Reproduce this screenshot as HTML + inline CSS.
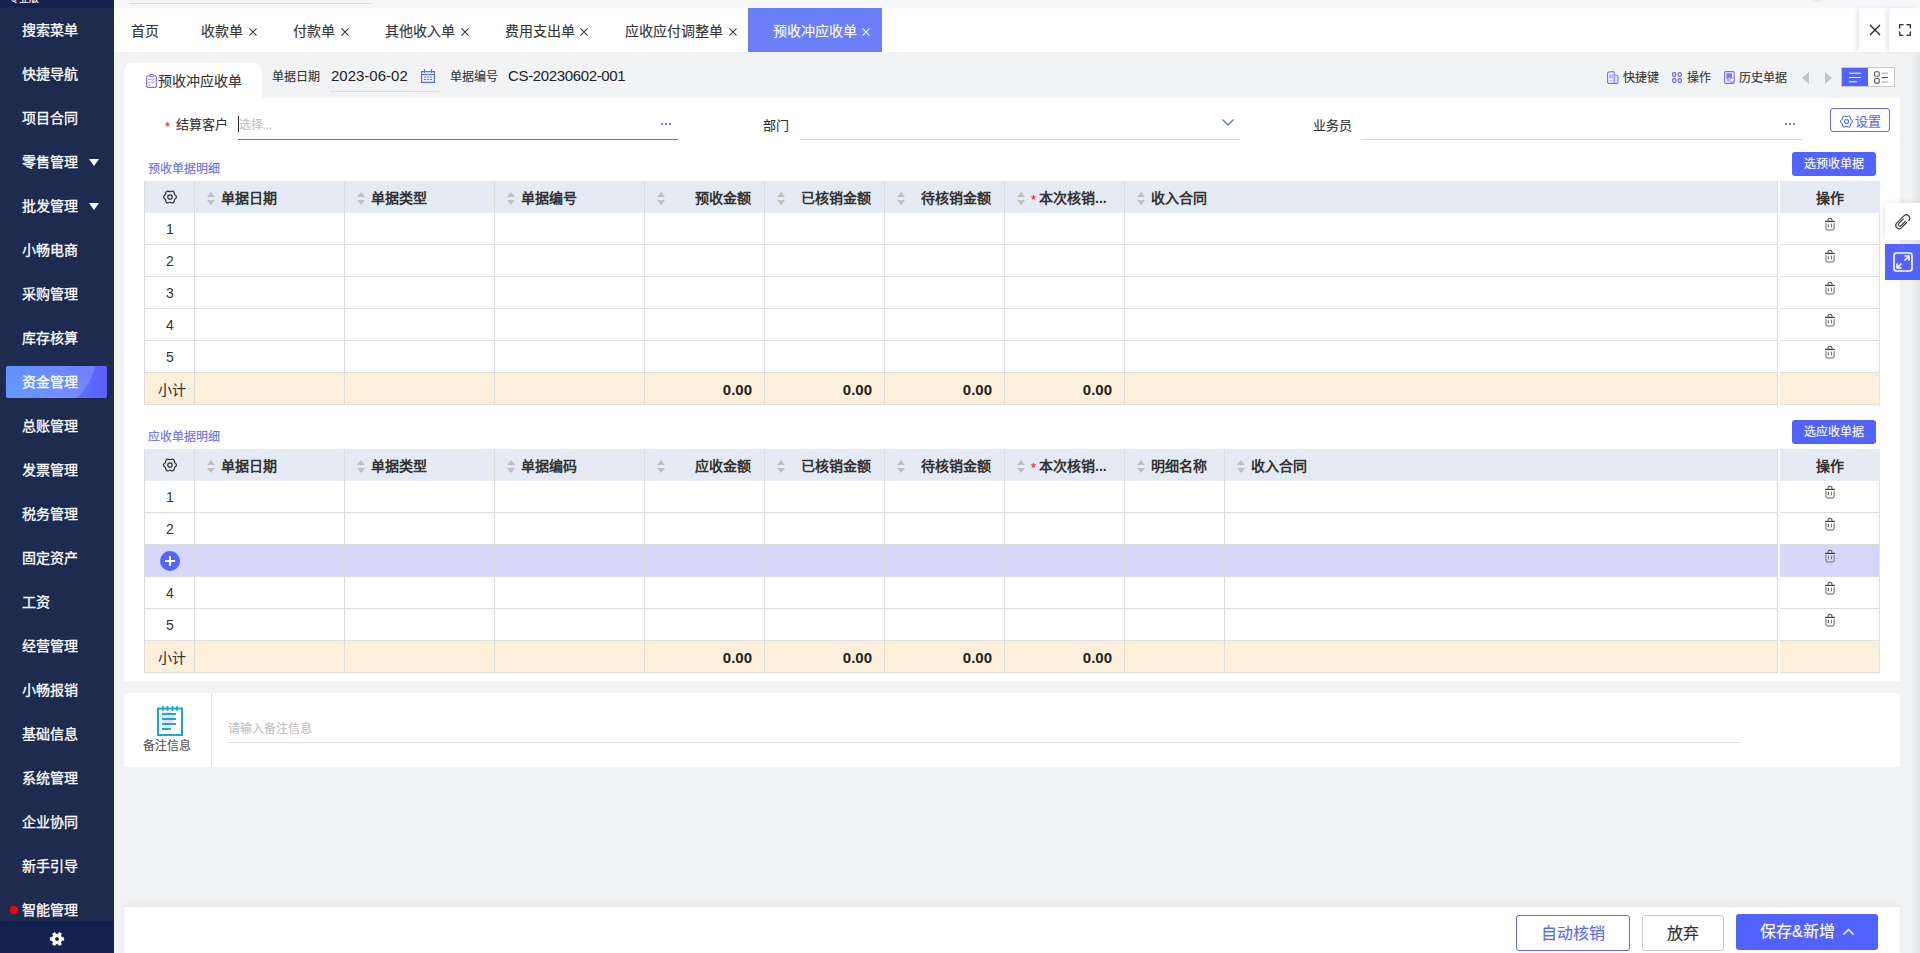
<!DOCTYPE html><html lang="zh-CN"><head><meta charset="utf-8"><title>预收冲应收单</title><style>
*{box-sizing:border-box;margin:0;padding:0}
html,body{width:1920px;height:953px;overflow:hidden}
body{position:relative;background:#f2f3f5;font-family:"Liberation Sans",sans-serif;color:#333}
.ab{position:absolute}
.t{position:absolute;white-space:nowrap;line-height:1;-webkit-text-stroke:0.12px}
svg{position:absolute;overflow:visible}
</style></head><body>
<div class="ab" style="left:0;top:0;width:114px;height:953px;background:#1e2b4e"></div>
<div class="ab" style="left:0;top:0;width:114px;height:8px;background:#17234f;overflow:hidden"><div class="t" style="left:9px;top:-6px;font-size:10px;color:#fff">专业版</div></div>
<div class="t" style="left:22px;top:23px;font-size:14px;-webkit-text-stroke:0.3px #fff;color:#fff">搜索菜单</div>
<div class="t" style="left:22px;top:67px;font-size:14px;-webkit-text-stroke:0.3px #fff;color:#fff">快捷导航</div>
<div class="t" style="left:22px;top:111px;font-size:14px;-webkit-text-stroke:0.3px #fff;color:#fff">项目合同</div>
<div class="t" style="left:22px;top:155px;font-size:14px;-webkit-text-stroke:0.3px #fff;color:#fff">零售管理</div>
<div class="ab" style="left:89px;top:159px;width:0;height:0;border-left:5px solid transparent;border-right:5px solid transparent;border-top:7px solid #fff"></div>
<div class="t" style="left:22px;top:199px;font-size:14px;-webkit-text-stroke:0.3px #fff;color:#fff">批发管理</div>
<div class="ab" style="left:89px;top:203px;width:0;height:0;border-left:5px solid transparent;border-right:5px solid transparent;border-top:7px solid #fff"></div>
<div class="t" style="left:22px;top:243px;font-size:14px;-webkit-text-stroke:0.3px #fff;color:#fff">小畅电商</div>
<div class="t" style="left:22px;top:287px;font-size:14px;-webkit-text-stroke:0.3px #fff;color:#fff">采购管理</div>
<div class="t" style="left:22px;top:331px;font-size:14px;-webkit-text-stroke:0.3px #fff;color:#fff">库存核算</div>
<div class="ab" style="left:6px;top:366px;width:101px;height:32px;border-radius:2px;background:radial-gradient(circle 79px at 14px -22px,rgba(255,255,255,0) 0,rgba(255,255,255,.08) 60px,rgba(255,255,255,.16) 78px,rgba(255,255,255,0) 79px),linear-gradient(90deg,#5a90ff 0%,#6585ff 50%,#5d6cff 80%,#5a5cff 100%)"></div>
<div class="t" style="left:22px;top:375px;font-size:14px;-webkit-text-stroke:0.3px #fff;color:#fff">资金管理</div>
<div class="t" style="left:22px;top:419px;font-size:14px;-webkit-text-stroke:0.3px #fff;color:#fff">总账管理</div>
<div class="t" style="left:22px;top:463px;font-size:14px;-webkit-text-stroke:0.3px #fff;color:#fff">发票管理</div>
<div class="t" style="left:22px;top:507px;font-size:14px;-webkit-text-stroke:0.3px #fff;color:#fff">税务管理</div>
<div class="t" style="left:22px;top:551px;font-size:14px;-webkit-text-stroke:0.3px #fff;color:#fff">固定资产</div>
<div class="t" style="left:22px;top:595px;font-size:14px;-webkit-text-stroke:0.3px #fff;color:#fff">工资</div>
<div class="t" style="left:22px;top:639px;font-size:14px;-webkit-text-stroke:0.3px #fff;color:#fff">经营管理</div>
<div class="t" style="left:22px;top:683px;font-size:14px;-webkit-text-stroke:0.3px #fff;color:#fff">小畅报销</div>
<div class="t" style="left:22px;top:727px;font-size:14px;-webkit-text-stroke:0.3px #fff;color:#fff">基础信息</div>
<div class="t" style="left:22px;top:771px;font-size:14px;-webkit-text-stroke:0.3px #fff;color:#fff">系统管理</div>
<div class="t" style="left:22px;top:815px;font-size:14px;-webkit-text-stroke:0.3px #fff;color:#fff">企业协同</div>
<div class="t" style="left:22px;top:859px;font-size:14px;-webkit-text-stroke:0.3px #fff;color:#fff">新手引导</div>
<div class="t" style="left:22px;top:903px;font-size:14px;-webkit-text-stroke:0.3px #fff;color:#fff">智能管理</div>
<div class="ab" style="left:10px;top:906px;width:8px;height:8px;border-radius:50%;background:#f00"></div>
<div class="ab" style="left:0;top:921px;width:114px;height:32px;background:#15224f"></div>
<svg style="left:50px;top:932px" width="14" height="14" viewBox="0 0 14 14"><g fill="#fff"><circle cx="7" cy="7" r="5.3"/><rect x="5.3" y="-0.1" width="3.4" height="3" rx=".6" transform="rotate(30 7 7)"/><rect x="5.3" y="-0.1" width="3.4" height="3" rx=".6" transform="rotate(90 7 7)"/><rect x="5.3" y="-0.1" width="3.4" height="3" rx=".6" transform="rotate(150 7 7)"/><rect x="5.3" y="-0.1" width="3.4" height="3" rx=".6" transform="rotate(210 7 7)"/><rect x="5.3" y="-0.1" width="3.4" height="3" rx=".6" transform="rotate(270 7 7)"/><rect x="5.3" y="-0.1" width="3.4" height="3" rx=".6" transform="rotate(330 7 7)"/></g><circle cx="7" cy="7" r="1.9" fill="#15224f"/></svg>
<div class="ab" style="left:114px;top:0;width:1806px;height:8px;background:#f6f7fb"></div>
<div class="ab" style="left:129px;top:3px;width:243px;height:1px;background:#dcdde0"></div>
<div class="ab" style="left:1808px;top:-16px;width:18px;height:18px;border-radius:50%;background:#ebecef"></div>
<div class="ab" style="left:114px;top:8px;width:1806px;height:44px;background:#fff"></div>
<div class="t" style="left:131px;top:24px;font-size:14px;color:#333">首页</div>
<div class="t" style="left:201px;top:24px;font-size:14px;color:#333">收款单</div>
<svg style="left:249px;top:28px" width="8" height="8" viewBox="0 0 9 9" preserveAspectRatio="none"><path d="M.5.5l8 8M8.5.5l-8 8" stroke="#333" stroke-width="1.15"/></svg>
<div class="t" style="left:293px;top:24px;font-size:14px;color:#333">付款单</div>
<svg style="left:341px;top:28px" width="8" height="8" viewBox="0 0 9 9" preserveAspectRatio="none"><path d="M.5.5l8 8M8.5.5l-8 8" stroke="#333" stroke-width="1.15"/></svg>
<div class="t" style="left:385px;top:24px;font-size:14px;color:#333">其他收入单</div>
<svg style="left:461px;top:28px" width="8" height="8" viewBox="0 0 9 9" preserveAspectRatio="none"><path d="M.5.5l8 8M8.5.5l-8 8" stroke="#333" stroke-width="1.15"/></svg>
<div class="t" style="left:505px;top:24px;font-size:14px;color:#333">费用支出单</div>
<svg style="left:580px;top:28px" width="8" height="8" viewBox="0 0 9 9" preserveAspectRatio="none"><path d="M.5.5l8 8M8.5.5l-8 8" stroke="#333" stroke-width="1.15"/></svg>
<div class="t" style="left:625px;top:24px;font-size:14px;color:#333">应收应付调整单</div>
<svg style="left:729px;top:28px" width="8" height="8" viewBox="0 0 9 9" preserveAspectRatio="none"><path d="M.5.5l8 8M8.5.5l-8 8" stroke="#333" stroke-width="1.15"/></svg>
<div class="ab" style="left:748px;top:8px;width:134px;height:44px;background:#6b80f8"></div>
<div class="t" style="left:773px;top:24px;font-size:14px;color:#fff">预收冲应收单</div>
<svg style="left:862px;top:28px" width="8" height="8" viewBox="0 0 9 9" preserveAspectRatio="none"><path d="M.5.5l8 8M8.5.5l-8 8" stroke="#fff" stroke-width="1.15"/></svg>
<div class="ab" style="left:1859px;top:8px;width:61px;height:44px;background:#fff;box-shadow:-4px 0 4px -1px rgba(0,0,0,.09)"></div>
<div class="ab" style="left:1889px;top:8px;width:31px;height:44px;background:#fff;box-shadow:-4px 0 4px -1px rgba(0,0,0,.09)"></div>
<svg style="left:1870px;top:25px" width="10" height="10" viewBox="0 0 10 10"><path d="M0 0l10 10M10 0L0 10" stroke="#222" stroke-width="1.3"/></svg>
<svg style="left:1899px;top:24px" width="12" height="12" viewBox="0 0 12 12"><path d="M.7 4V.7H4M8 .7h3.3V4M11.3 8v3.3H8M4 11.3H.7V8" fill="none" stroke="#2a2a2a" stroke-width="1.3" stroke-linecap="round" stroke-linejoin="round"/></svg>
<div class="ab" style="left:124px;top:63px;width:138px;height:36px;background:#fff;border-radius:8px 8px 0 0"></div>
<svg style="left:146px;top:74px" width="11" height="14" viewBox="0 0 11 14"><rect x=".6" y="1.8" width="9.8" height="11.6" rx="1.3" fill="none" stroke="#7b6cf6" stroke-width="1.1"/><rect x="3.5" y=".5" width="4" height="2.2" rx=".5" fill="#fff" stroke="#7b6cf6" stroke-width="1"/><path d="M2.3 5.5h2M2.3 8.3h2M2.3 11h2" stroke="#8a7cf6" stroke-width="1"/><path d="M5.3 5.2l1.2 1.1 2-2M5.3 8l1.2 1.1 2-2" fill="none" stroke="#7b6cf6" stroke-width="1"/></svg>
<div class="t" style="left:158px;top:74px;font-size:14px;color:#333">预收冲应收单</div>
<div class="t" style="left:272px;top:71px;font-size:12px;color:#333">单据日期</div>
<div class="t" style="left:331px;top:68px;font-size:15px;-webkit-text-stroke:0;color:#222">2023-06-02</div>
<div class="ab" style="left:330px;top:91px;width:109px;height:1px;background:#dcdde0"></div>
<svg style="left:421px;top:69px" width="14" height="14" viewBox="0 0 14 14"><rect x=".6" y="2.6" width="12.8" height="10.8" fill="none" stroke="#5b6af5" stroke-width="1.2"/><path d="M3.5 0v4M10.5 0v4M.6 5.5h12.8M3 8h2M6 8h2M9 8h2M3 10.5h2M6 10.5h2M9 10.5h2" stroke="#5b6af5" stroke-width="1.2"/></svg>
<div class="t" style="left:450px;top:71px;font-size:12px;color:#333">单据编号</div>
<div class="t" style="left:508px;top:68px;font-size:15px;-webkit-text-stroke:0;letter-spacing:-0.35px;color:#222">CS-20230602-001</div>
<svg style="left:1607px;top:71px" width="12" height="13" viewBox="0 0 12 13"><path d="M7.2 12.4H2A1.4 1.4 0 0 1 .6 11V2.4A1.4 1.4 0 0 1 2 1l4-.4a1.2 1.2 0 0 1 1.2 1.2zM7.2 4.2h2.6a1.2 1.2 0 0 1 1.2 1.2V11a1.4 1.4 0 0 1-1.4 1.4H7.2" fill="none" stroke="#7b6cf6" stroke-width="1.1"/><path d="M3 3.5v4M5 3.5v4M2.6 9.6h.9M4.6 9.6h.9M8.6 6.5h.8M8.6 9h.8" stroke="#8c80f4" stroke-width="1"/></svg>
<div class="t" style="left:1623px;top:72px;font-size:12px;color:#333">快捷键</div>
<svg style="left:1672px;top:72px" width="10" height="11" viewBox="0 0 10 11"><g fill="none" stroke="#6c5cf6" stroke-width="1.2"><rect x=".6" y=".6" width="3.2" height="3.8" rx="1.5"/><rect x="6.2" y=".6" width="3.2" height="3.8" rx="1.5"/><rect x=".6" y="6.6" width="3.2" height="3.8" rx="1.5"/><rect x="6.2" y="6.6" width="3.2" height="3.8" rx="1.5"/></g></svg>
<div class="t" style="left:1687px;top:72px;font-size:12px;color:#333">操作</div>
<svg style="left:1724px;top:71px" width="11" height="13" viewBox="0 0 11 13"><rect x=".6" y=".6" width="9.6" height="11.8" rx="1.2" fill="none" stroke="#7b6cf6" stroke-width="1.1"/><rect x="2.4" y="2.2" width="5.6" height="4.6" fill="#8577f3"/><path d="M2.4 6.8h1.6v3.4" fill="none" stroke="#8577f3" stroke-width="1.2"/><circle cx="8" cy="9" r="2.3" fill="#fff" stroke="#8577f3" stroke-width="1"/></svg>
<div class="t" style="left:1739px;top:72px;font-size:12px;color:#333">历史单据</div>
<div class="ab" style="left:1802px;top:72px;width:0;height:0;border-top:6px solid transparent;border-bottom:6px solid transparent;border-right:7px solid #c4c4c4"></div>
<div class="ab" style="left:1825px;top:72px;width:0;height:0;border-top:6px solid transparent;border-bottom:6px solid transparent;border-left:7px solid #c4c4c4"></div>
<div class="ab" style="left:1841px;top:67px;width:54px;height:20px;border:1px solid #c8c8c8;background:#fff"></div>
<div class="ab" style="left:1842px;top:68px;width:26px;height:18px;background:#5263f7"></div>
<svg style="left:1848px;top:72px" width="13" height="11" viewBox="0 0 13 11"><path d="M1 1.3h12M1 5.5h12M1 9.7h7.8" stroke="#fff" stroke-width="1.1"/></svg>
<svg style="left:1874px;top:71px" width="15" height="13" viewBox="0 0 15 13"><rect x=".6" y=".7" width="4.6" height="4.6" rx="1" fill="none" stroke="#555" stroke-width="1.1"/><rect x=".6" y="7.5" width="4.6" height="4.6" rx="1" fill="none" stroke="#555" stroke-width="1.1"/><path d="M7.6 2.2h6.3M7.6 11h6.3" stroke="#bdbdbd" stroke-width="1.4"/><path d="M7.6 6.6h6.3" stroke="#555" stroke-width="1.2"/></svg>
<div class="ab" style="left:124px;top:98px;width:1776px;height:583px;background:#fff"></div>
<div class="ab" style="left:1904px;top:52px;width:16px;height:901px;background:linear-gradient(90deg,#f2f3f5 0%,#f1f2f4 45%,#e4e5e7 100%)"></div>
<div class="t" style="left:165px;top:120px;font-size:13px;color:#f5222d">*</div>
<div class="t" style="left:176px;top:118px;font-size:13px;color:#333">结算客户</div>
<div class="ab" style="left:238px;top:116px;width:1px;height:16px;background:#222"></div>
<div class="t" style="left:239px;top:119px;font-size:12px;letter-spacing:-0.3px;color:#c0c0c0">选择...</div>
<div class="ab" style="left:238px;top:139px;width:440px;height:1px;background:#5a68f0"></div>
<div class="ab" style="left:661px;top:123px;width:2.4px;height:2.4px;border-radius:50%;background:#5656f0"></div><div class="ab" style="left:665px;top:123px;width:2.4px;height:2.4px;border-radius:50%;background:#5656f0"></div><div class="ab" style="left:669px;top:123px;width:2.4px;height:2.4px;border-radius:50%;background:#5656f0"></div>
<div class="t" style="left:763px;top:119px;font-size:13px;color:#333">部门</div>
<div class="ab" style="left:800px;top:139px;width:440px;height:1px;background:#d9d9d9"></div>
<svg style="left:1222px;top:119px" width="12" height="7" viewBox="0 0 12 7"><path d="M.5.5L6 6 11.5.5" fill="none" stroke="#5b6af5" stroke-width="1.3"/></svg>
<div class="t" style="left:1313px;top:119px;font-size:13px;color:#333">业务员</div>
<div class="ab" style="left:1362px;top:139px;width:440px;height:1px;background:#d9d9d9"></div>
<div class="ab" style="left:1785px;top:123px;width:2.4px;height:2.4px;border-radius:50%;background:#5656f0"></div><div class="ab" style="left:1789px;top:123px;width:2.4px;height:2.4px;border-radius:50%;background:#5656f0"></div><div class="ab" style="left:1793px;top:123px;width:2.4px;height:2.4px;border-radius:50%;background:#5656f0"></div>
<div class="ab" style="left:1830px;top:108px;width:60px;height:24px;border:1px solid #5b6af5;border-radius:3px;background:#fff"></div>
<svg style="left:1839.5px;top:115.3px" width="13" height="13" viewBox="0 0 14 14"><path d="M11.50 4.40Q15.50 7.00 11.50 9.60Q11.25 14.36 7.00 12.20Q2.75 14.36 2.50 9.60Q-1.50 7.00 2.50 4.40Q2.75 -0.36 7.00 1.80Q11.25 -0.36 11.50 4.40Z" fill="none" stroke="#5b6af5" stroke-width="1.1" stroke-linejoin="round"/><circle cx="7" cy="7" r="2.2" fill="none" stroke="#5b6af5" stroke-width="1.1"/></svg>
<div class="t" style="left:1855px;top:115px;font-size:13px;color:#5b6af5">设置</div>
<div class="t" style="left:148px;top:163px;font-size:12px;color:#6a6cf0">预收单据明细</div>
<div class="ab" style="left:1792px;top:152px;width:84px;height:24px;background:#5263ff;border-radius:3px"></div>
<div class="t" style="left:1804px;top:158px;font-size:12px;color:#fff">选预收单据</div>
<div class="ab" style="left:144px;top:181px;width:1634px;height:32px;background:#e6eaf4"></div>
<div class="ab" style="left:1780px;top:181px;width:100px;height:32px;background:#e6eaf4"></div>
<div class="ab" style="left:144px;top:373px;width:1634px;height:32px;background:#fdf0da"></div>
<div class="ab" style="left:1780px;top:373px;width:100px;height:32px;background:#fdf0da"></div>
<div class="ab" style="left:144px;top:244px;width:1634px;height:1px;background:#dedede"></div>
<div class="ab" style="left:1780px;top:244px;width:100px;height:1px;background:#dedede"></div>
<div class="ab" style="left:144px;top:276px;width:1634px;height:1px;background:#dedede"></div>
<div class="ab" style="left:1780px;top:276px;width:100px;height:1px;background:#dedede"></div>
<div class="ab" style="left:144px;top:308px;width:1634px;height:1px;background:#dedede"></div>
<div class="ab" style="left:1780px;top:308px;width:100px;height:1px;background:#dedede"></div>
<div class="ab" style="left:144px;top:340px;width:1634px;height:1px;background:#dedede"></div>
<div class="ab" style="left:1780px;top:340px;width:100px;height:1px;background:#dedede"></div>
<div class="ab" style="left:144px;top:372px;width:1634px;height:1px;background:#dedede"></div>
<div class="ab" style="left:1780px;top:372px;width:100px;height:1px;background:#dedede"></div>
<div class="ab" style="left:144px;top:404px;width:1634px;height:1px;background:#dedede"></div>
<div class="ab" style="left:1780px;top:404px;width:100px;height:1px;background:#dedede"></div>
<div class="ab" style="left:144px;top:181px;width:1px;height:224px;background:#dcdcdc"></div>
<div class="ab" style="left:194px;top:181px;width:1px;height:224px;background:#dcdcdc"></div>
<div class="ab" style="left:344px;top:181px;width:1px;height:224px;background:#dcdcdc"></div>
<div class="ab" style="left:494px;top:181px;width:1px;height:224px;background:#dcdcdc"></div>
<div class="ab" style="left:644px;top:181px;width:1px;height:224px;background:#dcdcdc"></div>
<div class="ab" style="left:764px;top:181px;width:1px;height:224px;background:#dcdcdc"></div>
<div class="ab" style="left:884px;top:181px;width:1px;height:224px;background:#dcdcdc"></div>
<div class="ab" style="left:1004px;top:181px;width:1px;height:224px;background:#dcdcdc"></div>
<div class="ab" style="left:1124px;top:181px;width:1px;height:224px;background:#dcdcdc"></div>
<div class="ab" style="left:1777px;top:181px;width:1px;height:224px;background:#dcdcdc"></div>
<div class="ab" style="left:1879px;top:213px;width:1px;height:193px;background:#e6e6e6"></div>
<svg style="left:162.5px;top:190.3px" width="14" height="14" viewBox="0 0 14 14"><path d="M11.50 4.40Q15.50 7.00 11.50 9.60Q11.25 14.36 7.00 12.20Q2.75 14.36 2.50 9.60Q-1.50 7.00 2.50 4.40Q2.75 -0.36 7.00 1.80Q11.25 -0.36 11.50 4.40Z" fill="none" stroke="#333" stroke-width="1.25" stroke-linejoin="round"/><circle cx="7" cy="7" r="2.2" fill="none" stroke="#333" stroke-width="1.25"/></svg>
<div class="ab" style="left:207px;top:192px;width:0;height:0;border-left:4px solid transparent;border-right:4px solid transparent;border-bottom:5px solid #c0c0c0"></div>
<div class="ab" style="left:207px;top:200px;width:0;height:0;border-left:4px solid transparent;border-right:4px solid transparent;border-top:5px solid #c0c0c0"></div>
<div class="t" style="left:221px;top:191px;font-size:14px;font-weight:bold;-webkit-text-stroke:0;color:#333">单据日期</div>
<div class="ab" style="left:357px;top:192px;width:0;height:0;border-left:4px solid transparent;border-right:4px solid transparent;border-bottom:5px solid #c0c0c0"></div>
<div class="ab" style="left:357px;top:200px;width:0;height:0;border-left:4px solid transparent;border-right:4px solid transparent;border-top:5px solid #c0c0c0"></div>
<div class="t" style="left:371px;top:191px;font-size:14px;font-weight:bold;-webkit-text-stroke:0;color:#333">单据类型</div>
<div class="ab" style="left:507px;top:192px;width:0;height:0;border-left:4px solid transparent;border-right:4px solid transparent;border-bottom:5px solid #c0c0c0"></div>
<div class="ab" style="left:507px;top:200px;width:0;height:0;border-left:4px solid transparent;border-right:4px solid transparent;border-top:5px solid #c0c0c0"></div>
<div class="t" style="left:521px;top:191px;font-size:14px;font-weight:bold;-webkit-text-stroke:0;color:#333">单据编号</div>
<div class="ab" style="left:657px;top:192px;width:0;height:0;border-left:4px solid transparent;border-right:4px solid transparent;border-bottom:5px solid #c0c0c0"></div>
<div class="ab" style="left:657px;top:200px;width:0;height:0;border-left:4px solid transparent;border-right:4px solid transparent;border-top:5px solid #c0c0c0"></div>
<div class="t" style="left:644px;width:107px;text-align:right;top:191px;font-size:14px;font-weight:bold;-webkit-text-stroke:0;color:#333">预收金额</div>
<div class="ab" style="left:777px;top:192px;width:0;height:0;border-left:4px solid transparent;border-right:4px solid transparent;border-bottom:5px solid #c0c0c0"></div>
<div class="ab" style="left:777px;top:200px;width:0;height:0;border-left:4px solid transparent;border-right:4px solid transparent;border-top:5px solid #c0c0c0"></div>
<div class="t" style="left:764px;width:107px;text-align:right;top:191px;font-size:14px;font-weight:bold;-webkit-text-stroke:0;color:#333">已核销金额</div>
<div class="ab" style="left:897px;top:192px;width:0;height:0;border-left:4px solid transparent;border-right:4px solid transparent;border-bottom:5px solid #c0c0c0"></div>
<div class="ab" style="left:897px;top:200px;width:0;height:0;border-left:4px solid transparent;border-right:4px solid transparent;border-top:5px solid #c0c0c0"></div>
<div class="t" style="left:884px;width:107px;text-align:right;top:191px;font-size:14px;font-weight:bold;-webkit-text-stroke:0;color:#333">待核销金额</div>
<div class="ab" style="left:1017px;top:192px;width:0;height:0;border-left:4px solid transparent;border-right:4px solid transparent;border-bottom:5px solid #c0c0c0"></div>
<div class="ab" style="left:1017px;top:200px;width:0;height:0;border-left:4px solid transparent;border-right:4px solid transparent;border-top:5px solid #c0c0c0"></div>
<div class="t" style="left:1031px;top:193px;font-size:13px;color:#f5222d">*</div>
<div class="t" style="left:1039px;top:191px;font-size:14px;font-weight:bold;-webkit-text-stroke:0;color:#333">本次核销...</div>
<div class="ab" style="left:1137px;top:192px;width:0;height:0;border-left:4px solid transparent;border-right:4px solid transparent;border-bottom:5px solid #c0c0c0"></div>
<div class="ab" style="left:1137px;top:200px;width:0;height:0;border-left:4px solid transparent;border-right:4px solid transparent;border-top:5px solid #c0c0c0"></div>
<div class="t" style="left:1151px;top:191px;font-size:14px;font-weight:bold;-webkit-text-stroke:0;color:#333">收入合同</div>
<div class="t" style="left:1816px;top:191px;font-size:14px;font-weight:bold;-webkit-text-stroke:0;color:#333">操作</div>
<div class="t" style="left:164px;width:12px;text-align:center;top:222px;font-size:14px;-webkit-text-stroke:0;color:#333">1</div>
<svg style="left:1825px;top:217px" width="10" height="14" viewBox="0 0 10 14"><path d="M3 4.4V3.3a2 1.9 0 0 1 4 0v1.1" fill="none" stroke="#666" stroke-width="1.1"/><path d="M0 4.4h10" stroke="#333" stroke-width="1.1"/><path d="M.9 6v5c0 1.2.8 1.9 2 1.9h4.2c1.2 0 2-.7 2-1.9V6" fill="none" stroke="#999" stroke-width="1.5"/><path d="M3.5 6.7v3.7M6.5 6.7v3.7" stroke="#777" stroke-width="1"/></svg>
<div class="t" style="left:164px;width:12px;text-align:center;top:254px;font-size:14px;-webkit-text-stroke:0;color:#333">2</div>
<svg style="left:1825px;top:249px" width="10" height="14" viewBox="0 0 10 14"><path d="M3 4.4V3.3a2 1.9 0 0 1 4 0v1.1" fill="none" stroke="#666" stroke-width="1.1"/><path d="M0 4.4h10" stroke="#333" stroke-width="1.1"/><path d="M.9 6v5c0 1.2.8 1.9 2 1.9h4.2c1.2 0 2-.7 2-1.9V6" fill="none" stroke="#999" stroke-width="1.5"/><path d="M3.5 6.7v3.7M6.5 6.7v3.7" stroke="#777" stroke-width="1"/></svg>
<div class="t" style="left:164px;width:12px;text-align:center;top:286px;font-size:14px;-webkit-text-stroke:0;color:#333">3</div>
<svg style="left:1825px;top:281px" width="10" height="14" viewBox="0 0 10 14"><path d="M3 4.4V3.3a2 1.9 0 0 1 4 0v1.1" fill="none" stroke="#666" stroke-width="1.1"/><path d="M0 4.4h10" stroke="#333" stroke-width="1.1"/><path d="M.9 6v5c0 1.2.8 1.9 2 1.9h4.2c1.2 0 2-.7 2-1.9V6" fill="none" stroke="#999" stroke-width="1.5"/><path d="M3.5 6.7v3.7M6.5 6.7v3.7" stroke="#777" stroke-width="1"/></svg>
<div class="t" style="left:164px;width:12px;text-align:center;top:318px;font-size:14px;-webkit-text-stroke:0;color:#333">4</div>
<svg style="left:1825px;top:313px" width="10" height="14" viewBox="0 0 10 14"><path d="M3 4.4V3.3a2 1.9 0 0 1 4 0v1.1" fill="none" stroke="#666" stroke-width="1.1"/><path d="M0 4.4h10" stroke="#333" stroke-width="1.1"/><path d="M.9 6v5c0 1.2.8 1.9 2 1.9h4.2c1.2 0 2-.7 2-1.9V6" fill="none" stroke="#999" stroke-width="1.5"/><path d="M3.5 6.7v3.7M6.5 6.7v3.7" stroke="#777" stroke-width="1"/></svg>
<div class="t" style="left:164px;width:12px;text-align:center;top:350px;font-size:14px;-webkit-text-stroke:0;color:#333">5</div>
<svg style="left:1825px;top:345px" width="10" height="14" viewBox="0 0 10 14"><path d="M3 4.4V3.3a2 1.9 0 0 1 4 0v1.1" fill="none" stroke="#666" stroke-width="1.1"/><path d="M0 4.4h10" stroke="#333" stroke-width="1.1"/><path d="M.9 6v5c0 1.2.8 1.9 2 1.9h4.2c1.2 0 2-.7 2-1.9V6" fill="none" stroke="#999" stroke-width="1.5"/><path d="M3.5 6.7v3.7M6.5 6.7v3.7" stroke="#777" stroke-width="1"/></svg>
<div class="t" style="left:158px;top:383px;font-size:14px;color:#333">小计</div>
<div class="t" style="left:644px;width:108px;text-align:right;top:382px;font-size:15px;font-weight:bold;-webkit-text-stroke:0;color:#222">0.00</div>
<div class="t" style="left:764px;width:108px;text-align:right;top:382px;font-size:15px;font-weight:bold;-webkit-text-stroke:0;color:#222">0.00</div>
<div class="t" style="left:884px;width:108px;text-align:right;top:382px;font-size:15px;font-weight:bold;-webkit-text-stroke:0;color:#222">0.00</div>
<div class="t" style="left:1004px;width:108px;text-align:right;top:382px;font-size:15px;font-weight:bold;-webkit-text-stroke:0;color:#222">0.00</div>
<div class="ab" style="left:1870px;top:213px;width:10px;height:159px;background:linear-gradient(90deg,rgba(0,0,0,0),rgba(0,0,0,.025))"></div>
<div class="t" style="left:148px;top:431px;font-size:12px;color:#6a6cf0">应收单据明细</div>
<div class="ab" style="left:1792px;top:420px;width:84px;height:24px;background:#5263ff;border-radius:3px"></div>
<div class="t" style="left:1804px;top:426px;font-size:12px;color:#fff">选应收单据</div>
<div class="ab" style="left:144px;top:449px;width:1634px;height:32px;background:#e6eaf4"></div>
<div class="ab" style="left:1780px;top:449px;width:100px;height:32px;background:#e6eaf4"></div>
<div class="ab" style="left:144px;top:545px;width:1634px;height:32px;background:#d5d8fb"></div>
<div class="ab" style="left:1780px;top:545px;width:100px;height:32px;background:#d5d8fb"></div>
<div class="ab" style="left:144px;top:641px;width:1634px;height:32px;background:#fdf0da"></div>
<div class="ab" style="left:1780px;top:641px;width:100px;height:32px;background:#fdf0da"></div>
<div class="ab" style="left:144px;top:512px;width:1634px;height:1px;background:#dedede"></div>
<div class="ab" style="left:1780px;top:512px;width:100px;height:1px;background:#dedede"></div>
<div class="ab" style="left:144px;top:544px;width:1634px;height:1px;background:#dedede"></div>
<div class="ab" style="left:1780px;top:544px;width:100px;height:1px;background:#dedede"></div>
<div class="ab" style="left:144px;top:576px;width:1634px;height:1px;background:#dedede"></div>
<div class="ab" style="left:1780px;top:576px;width:100px;height:1px;background:#dedede"></div>
<div class="ab" style="left:144px;top:608px;width:1634px;height:1px;background:#dedede"></div>
<div class="ab" style="left:1780px;top:608px;width:100px;height:1px;background:#dedede"></div>
<div class="ab" style="left:144px;top:640px;width:1634px;height:1px;background:#dedede"></div>
<div class="ab" style="left:1780px;top:640px;width:100px;height:1px;background:#dedede"></div>
<div class="ab" style="left:144px;top:672px;width:1634px;height:1px;background:#dedede"></div>
<div class="ab" style="left:1780px;top:672px;width:100px;height:1px;background:#dedede"></div>
<div class="ab" style="left:144px;top:449px;width:1px;height:224px;background:#dcdcdc"></div>
<div class="ab" style="left:194px;top:449px;width:1px;height:224px;background:#dcdcdc"></div>
<div class="ab" style="left:344px;top:449px;width:1px;height:224px;background:#dcdcdc"></div>
<div class="ab" style="left:494px;top:449px;width:1px;height:224px;background:#dcdcdc"></div>
<div class="ab" style="left:644px;top:449px;width:1px;height:224px;background:#dcdcdc"></div>
<div class="ab" style="left:764px;top:449px;width:1px;height:224px;background:#dcdcdc"></div>
<div class="ab" style="left:884px;top:449px;width:1px;height:224px;background:#dcdcdc"></div>
<div class="ab" style="left:1004px;top:449px;width:1px;height:224px;background:#dcdcdc"></div>
<div class="ab" style="left:1124px;top:449px;width:1px;height:224px;background:#dcdcdc"></div>
<div class="ab" style="left:1224px;top:449px;width:1px;height:224px;background:#dcdcdc"></div>
<div class="ab" style="left:1777px;top:449px;width:1px;height:224px;background:#dcdcdc"></div>
<div class="ab" style="left:1879px;top:481px;width:1px;height:193px;background:#e6e6e6"></div>
<svg style="left:162.5px;top:458.3px" width="14" height="14" viewBox="0 0 14 14"><path d="M11.50 4.40Q15.50 7.00 11.50 9.60Q11.25 14.36 7.00 12.20Q2.75 14.36 2.50 9.60Q-1.50 7.00 2.50 4.40Q2.75 -0.36 7.00 1.80Q11.25 -0.36 11.50 4.40Z" fill="none" stroke="#333" stroke-width="1.25" stroke-linejoin="round"/><circle cx="7" cy="7" r="2.2" fill="none" stroke="#333" stroke-width="1.25"/></svg>
<div class="ab" style="left:207px;top:460px;width:0;height:0;border-left:4px solid transparent;border-right:4px solid transparent;border-bottom:5px solid #c0c0c0"></div>
<div class="ab" style="left:207px;top:468px;width:0;height:0;border-left:4px solid transparent;border-right:4px solid transparent;border-top:5px solid #c0c0c0"></div>
<div class="t" style="left:221px;top:459px;font-size:14px;font-weight:bold;-webkit-text-stroke:0;color:#333">单据日期</div>
<div class="ab" style="left:357px;top:460px;width:0;height:0;border-left:4px solid transparent;border-right:4px solid transparent;border-bottom:5px solid #c0c0c0"></div>
<div class="ab" style="left:357px;top:468px;width:0;height:0;border-left:4px solid transparent;border-right:4px solid transparent;border-top:5px solid #c0c0c0"></div>
<div class="t" style="left:371px;top:459px;font-size:14px;font-weight:bold;-webkit-text-stroke:0;color:#333">单据类型</div>
<div class="ab" style="left:507px;top:460px;width:0;height:0;border-left:4px solid transparent;border-right:4px solid transparent;border-bottom:5px solid #c0c0c0"></div>
<div class="ab" style="left:507px;top:468px;width:0;height:0;border-left:4px solid transparent;border-right:4px solid transparent;border-top:5px solid #c0c0c0"></div>
<div class="t" style="left:521px;top:459px;font-size:14px;font-weight:bold;-webkit-text-stroke:0;color:#333">单据编码</div>
<div class="ab" style="left:657px;top:460px;width:0;height:0;border-left:4px solid transparent;border-right:4px solid transparent;border-bottom:5px solid #c0c0c0"></div>
<div class="ab" style="left:657px;top:468px;width:0;height:0;border-left:4px solid transparent;border-right:4px solid transparent;border-top:5px solid #c0c0c0"></div>
<div class="t" style="left:644px;width:107px;text-align:right;top:459px;font-size:14px;font-weight:bold;-webkit-text-stroke:0;color:#333">应收金额</div>
<div class="ab" style="left:777px;top:460px;width:0;height:0;border-left:4px solid transparent;border-right:4px solid transparent;border-bottom:5px solid #c0c0c0"></div>
<div class="ab" style="left:777px;top:468px;width:0;height:0;border-left:4px solid transparent;border-right:4px solid transparent;border-top:5px solid #c0c0c0"></div>
<div class="t" style="left:764px;width:107px;text-align:right;top:459px;font-size:14px;font-weight:bold;-webkit-text-stroke:0;color:#333">已核销金额</div>
<div class="ab" style="left:897px;top:460px;width:0;height:0;border-left:4px solid transparent;border-right:4px solid transparent;border-bottom:5px solid #c0c0c0"></div>
<div class="ab" style="left:897px;top:468px;width:0;height:0;border-left:4px solid transparent;border-right:4px solid transparent;border-top:5px solid #c0c0c0"></div>
<div class="t" style="left:884px;width:107px;text-align:right;top:459px;font-size:14px;font-weight:bold;-webkit-text-stroke:0;color:#333">待核销金额</div>
<div class="ab" style="left:1017px;top:460px;width:0;height:0;border-left:4px solid transparent;border-right:4px solid transparent;border-bottom:5px solid #c0c0c0"></div>
<div class="ab" style="left:1017px;top:468px;width:0;height:0;border-left:4px solid transparent;border-right:4px solid transparent;border-top:5px solid #c0c0c0"></div>
<div class="t" style="left:1031px;top:461px;font-size:13px;color:#f5222d">*</div>
<div class="t" style="left:1039px;top:459px;font-size:14px;font-weight:bold;-webkit-text-stroke:0;color:#333">本次核销...</div>
<div class="ab" style="left:1137px;top:460px;width:0;height:0;border-left:4px solid transparent;border-right:4px solid transparent;border-bottom:5px solid #c0c0c0"></div>
<div class="ab" style="left:1137px;top:468px;width:0;height:0;border-left:4px solid transparent;border-right:4px solid transparent;border-top:5px solid #c0c0c0"></div>
<div class="t" style="left:1151px;top:459px;font-size:14px;font-weight:bold;-webkit-text-stroke:0;color:#333">明细名称</div>
<div class="ab" style="left:1237px;top:460px;width:0;height:0;border-left:4px solid transparent;border-right:4px solid transparent;border-bottom:5px solid #c0c0c0"></div>
<div class="ab" style="left:1237px;top:468px;width:0;height:0;border-left:4px solid transparent;border-right:4px solid transparent;border-top:5px solid #c0c0c0"></div>
<div class="t" style="left:1251px;top:459px;font-size:14px;font-weight:bold;-webkit-text-stroke:0;color:#333">收入合同</div>
<div class="t" style="left:1816px;top:459px;font-size:14px;font-weight:bold;-webkit-text-stroke:0;color:#333">操作</div>
<div class="t" style="left:164px;width:12px;text-align:center;top:490px;font-size:14px;-webkit-text-stroke:0;color:#333">1</div>
<svg style="left:1825px;top:485px" width="10" height="14" viewBox="0 0 10 14"><path d="M3 4.4V3.3a2 1.9 0 0 1 4 0v1.1" fill="none" stroke="#666" stroke-width="1.1"/><path d="M0 4.4h10" stroke="#333" stroke-width="1.1"/><path d="M.9 6v5c0 1.2.8 1.9 2 1.9h4.2c1.2 0 2-.7 2-1.9V6" fill="none" stroke="#999" stroke-width="1.5"/><path d="M3.5 6.7v3.7M6.5 6.7v3.7" stroke="#777" stroke-width="1"/></svg>
<div class="t" style="left:164px;width:12px;text-align:center;top:522px;font-size:14px;-webkit-text-stroke:0;color:#333">2</div>
<svg style="left:1825px;top:517px" width="10" height="14" viewBox="0 0 10 14"><path d="M3 4.4V3.3a2 1.9 0 0 1 4 0v1.1" fill="none" stroke="#666" stroke-width="1.1"/><path d="M0 4.4h10" stroke="#333" stroke-width="1.1"/><path d="M.9 6v5c0 1.2.8 1.9 2 1.9h4.2c1.2 0 2-.7 2-1.9V6" fill="none" stroke="#999" stroke-width="1.5"/><path d="M3.5 6.7v3.7M6.5 6.7v3.7" stroke="#777" stroke-width="1"/></svg>
<div class="ab" style="left:160px;top:551px;width:20px;height:20px;border-radius:50%;background:#5364ff"></div>
<div class="ab" style="left:165px;top:560px;width:10px;height:2px;background:#fff"></div>
<div class="ab" style="left:169px;top:556px;width:2px;height:10px;background:#fff"></div>
<svg style="left:1825px;top:549px" width="10" height="14" viewBox="0 0 10 14"><path d="M3 4.4V3.3a2 1.9 0 0 1 4 0v1.1" fill="none" stroke="#666" stroke-width="1.1"/><path d="M0 4.4h10" stroke="#333" stroke-width="1.1"/><path d="M.9 6v5c0 1.2.8 1.9 2 1.9h4.2c1.2 0 2-.7 2-1.9V6" fill="none" stroke="#999" stroke-width="1.5"/><path d="M3.5 6.7v3.7M6.5 6.7v3.7" stroke="#777" stroke-width="1"/></svg>
<div class="t" style="left:164px;width:12px;text-align:center;top:586px;font-size:14px;-webkit-text-stroke:0;color:#333">4</div>
<svg style="left:1825px;top:581px" width="10" height="14" viewBox="0 0 10 14"><path d="M3 4.4V3.3a2 1.9 0 0 1 4 0v1.1" fill="none" stroke="#666" stroke-width="1.1"/><path d="M0 4.4h10" stroke="#333" stroke-width="1.1"/><path d="M.9 6v5c0 1.2.8 1.9 2 1.9h4.2c1.2 0 2-.7 2-1.9V6" fill="none" stroke="#999" stroke-width="1.5"/><path d="M3.5 6.7v3.7M6.5 6.7v3.7" stroke="#777" stroke-width="1"/></svg>
<div class="t" style="left:164px;width:12px;text-align:center;top:618px;font-size:14px;-webkit-text-stroke:0;color:#333">5</div>
<svg style="left:1825px;top:613px" width="10" height="14" viewBox="0 0 10 14"><path d="M3 4.4V3.3a2 1.9 0 0 1 4 0v1.1" fill="none" stroke="#666" stroke-width="1.1"/><path d="M0 4.4h10" stroke="#333" stroke-width="1.1"/><path d="M.9 6v5c0 1.2.8 1.9 2 1.9h4.2c1.2 0 2-.7 2-1.9V6" fill="none" stroke="#999" stroke-width="1.5"/><path d="M3.5 6.7v3.7M6.5 6.7v3.7" stroke="#777" stroke-width="1"/></svg>
<div class="t" style="left:158px;top:651px;font-size:14px;color:#333">小计</div>
<div class="t" style="left:644px;width:108px;text-align:right;top:650px;font-size:15px;font-weight:bold;-webkit-text-stroke:0;color:#222">0.00</div>
<div class="t" style="left:764px;width:108px;text-align:right;top:650px;font-size:15px;font-weight:bold;-webkit-text-stroke:0;color:#222">0.00</div>
<div class="t" style="left:884px;width:108px;text-align:right;top:650px;font-size:15px;font-weight:bold;-webkit-text-stroke:0;color:#222">0.00</div>
<div class="t" style="left:1004px;width:108px;text-align:right;top:650px;font-size:15px;font-weight:bold;-webkit-text-stroke:0;color:#222">0.00</div>
<div class="ab" style="left:1870px;top:481px;width:10px;height:159px;background:linear-gradient(90deg,rgba(0,0,0,0),rgba(0,0,0,.025))"></div>
<div class="ab" style="left:124px;top:693px;width:1776px;height:74px;background:#fff"></div>
<div class="ab" style="left:211px;top:693px;width:1px;height:74px;background:#dedede"></div>
<svg style="left:157px;top:706px" width="26" height="30" viewBox="0 0 26 30"><circle cx="11" cy="12" r="6.5" fill="#e6e2fa"/><rect x="1" y="2.5" width="24" height="26.5" fill="none" stroke="#1ba8d0" stroke-width="2"/><path d="M6 0v5M10.5 0v5M15.5 0v5M20 0v5" stroke="#1ba8d0" stroke-width="1.6"/><path d="M5 8h14M5 13h14M5 18h14M5 23h9" stroke="#1ba8d0" stroke-width="1.8"/></svg>
<div class="t" style="left:143px;top:740px;font-size:12px;color:#555">备注信息</div>
<div class="t" style="left:228px;top:723px;font-size:12px;color:#c0c0c0">请输入备注信息</div>
<div class="ab" style="left:228px;top:742px;width:1512px;height:1px;background:#dcdcdc"></div>
<div class="ab" style="left:1885px;top:203px;width:35px;height:37px;background:#fff;box-shadow:0 0 6px rgba(0,0,0,.12)"></div>
<svg style="left:1894px;top:213px" width="17" height="18" viewBox="0 0 17 18"><path d="M12.6 9.5L7.33 14.83A3.3 3.3 0 0 1 2.67 10.17L10.17 2.67A3.3 3.3 0 0 1 14.83 7.33" fill="none" stroke="#333" stroke-width="1.1" stroke-linecap="round"/><path d="M9.3 6.1L4.74 10.64A1.5 1.5 0 0 0 6.86 12.76L11.4 8.2" fill="none" stroke="#333" stroke-width="1.1" stroke-linecap="round"/></svg>
<div class="ab" style="left:1885px;top:244px;width:35px;height:36px;background:#5263ff"></div>
<svg style="left:1893px;top:252px" width="20" height="20" viewBox="0 0 20 20"><rect x="1" y="1" width="18" height="18" rx="2.5" fill="none" stroke="#fff" stroke-width="1.6"/><path d="M11.5 4h4.5v4.5M16 4l-4.5 4.5M8.5 16H4v-4.5M4 16l4.5-4.5" fill="none" stroke="#fff" stroke-width="1.6"/></svg>
<div class="ab" style="left:124px;top:907px;width:1776px;height:46px;background:#fff;box-shadow:0 -2px 6px rgba(0,0,0,.06)"></div>
<div class="ab" style="left:1516px;top:915px;width:114px;height:36px;border:1px solid #5b6af5;border-radius:3px"></div>
<div class="t" style="left:1541px;top:926px;font-size:16px;color:#5b6af5">自动核销</div>
<div class="ab" style="left:1642px;top:915px;width:82px;height:36px;border:1px solid #c8c8c8;border-radius:3px"></div>
<div class="t" style="left:1667px;top:926px;font-size:16px;color:#333">放弃</div>
<div class="ab" style="left:1736px;top:914px;width:142px;height:36px;background:#5263ff;border-radius:3px"></div>
<div class="t" style="left:1760px;top:924px;font-size:16px;color:#fff">保存&amp;新增</div>
<svg style="left:1843px;top:928px" width="11" height="7" viewBox="0 0 11 7"><path d="M.5 6.5l5-5 5 5" fill="none" stroke="#fff" stroke-width="1.4"/></svg>
</body></html>
